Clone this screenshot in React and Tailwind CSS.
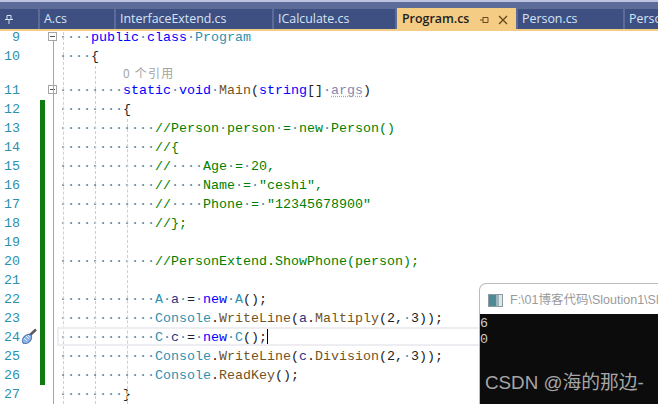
const tabs = [
  { label: '', w: 'w-[38px]', pin: true },
  { label: 'A.cs', w: 'w-[74px]' },
  { label: 'InterfaceExtend.cs', w: 'w-[156px]' },
  { label: 'ICalculate.cs', w: 'w-[121px]' },
  { label: 'Program.cs', w: 'w-[119px]', active: true },
  { label: 'Person.cs', w: 'w-[105px]' },
  { label: 'Person.cs', w: 'w-[60px]' },
];

const colors = {
  k: 'text-[#0000ff]',
  t: 'text-[#2b91af]',
  m: 'text-[#74531f]',
  c: 'text-[#008000]',
  v: 'text-[#1f377f]',
  a: 'text-[#7f88b5] underline decoration-dotted decoration-[#a9a9a9] underline-offset-2',
  p: 'text-[#222222]',
};

const lines = [
  { n: 9, open: true, clip: true, code: [['', '    '], ['k', 'public class '], ['t', 'Program']] },
  { n: 10, code: [['', '    '], ['p', '{']] },
  { lens: true },
  { n: 11, open: true, code: [['', '        '], ['k', 'static void '], ['m', 'Main'], ['p', '('], ['k', 'string'], ['p', '[] '], ['a', 'args'], ['p', ')']] },
  { n: 12, bar: true, code: [['', '        '], ['p', '{']] },
  { n: 13, bar: true, code: [['', '            '], ['c', '//Person person = new Person()']] },
  { n: 14, bar: true, code: [['', '            '], ['c', '//{']] },
  { n: 15, bar: true, code: [['', '            '], ['c', '//    Age = 20,']] },
  { n: 16, bar: true, code: [['', '            '], ['c', '//    Name = "ceshi",']] },
  { n: 17, bar: true, code: [['', '            '], ['c', '//    Phone = "12345678900"']] },
  { n: 18, bar: true, code: [['', '            '], ['c', '//};']] },
  { n: 19, bar: true, code: [] },
  { n: 20, bar: true, code: [['', '            '], ['c', '//PersonExtend.ShowPhone(person);']] },
  { n: 21, bar: true, code: [] },
  { n: 22, bar: true, code: [['', '            '], ['t', 'A '], ['v', 'a '], ['p', '= '], ['k', 'new '], ['t', 'A'], ['p', '();']] },
  { n: 23, bar: true, code: [['', '            '], ['t', 'Console'], ['p', '.'], ['m', 'WriteLine'], ['p', '('], ['v', 'a'], ['p', '.'], ['m', 'Maltiply'], ['p', '(2, 3));']] },
  { n: 24, bar: true, current: true, code: [['', '            '], ['t', 'C '], ['v', 'c '], ['p', '= '], ['k', 'new '], ['t', 'C'], ['p', '();']] },
  { n: 25, bar: true, code: [['', '            '], ['t', 'Console'], ['p', '.'], ['m', 'WriteLine'], ['p', '('], ['v', 'c'], ['p', '.'], ['m', 'Division'], ['p', '(2, 3));']] },
  { n: 26, bar: true, code: [['', '            '], ['t', 'Console'], ['p', '.'], ['m', 'ReadKey'], ['p', '();']] },
  { n: 27, code: [['', '        '], ['p', '}']] },
];

// spaces show up as visible-whitespace dots in the editor
function Token({ kind, text }) {
  return text.split(/( )/).map((part, i) =>
    part === ' ' ? (
      <span key={i} className="text-[#2b91af]">·</span>
    ) : (
      <span key={i} className={colors[kind]}>{part}</span>
    )
  );
}

function Screwdriver() {
  return (
    <svg className="absolute left-[1px] top-0" width="17" height="16" viewBox="0 0 17 16">
      <path d="M8 8 L15 1.5" stroke="#5a5a5a" strokeWidth="2.5" />
      <ellipse cx="6" cy="11" rx="5.5" ry="3.6" transform="rotate(-45 6 11)" fill="#8db4e6" stroke="#3f6fb0" />
      <path d="M3 10 L6 13 M5 8 L8 11 M7 7 L9 9" stroke="#e3edf9" strokeWidth="1" />
    </svg>
  );
}

function CodeRow({ line }) {
  if (line.lens) {
    return (
      <div className="h-[15px] pl-[123px] text-[12px] leading-[14px] tracking-[1.2px] text-[#a3a3a3] font-['Noto_Sans_CJK_SC',sans-serif]">
        0 个引用
      </div>
    );
  }
  return (
    <div className={`flex overflow-hidden ${line.clip ? 'h-[15px]' : 'h-[19px]'}`}>
      <div className={`w-5 shrink-0 text-right text-[#2b91af] ${line.clip ? '-mt-1' : ''}`}>{line.n}</div>
      <div className="relative w-[39px] shrink-0">
        {line.n === 24 && <Screwdriver />}
        {line.bar && <div className="ml-5 h-full w-[5px] bg-[#107c10]" />}
        {line.open && (
          <div className={`absolute left-[28px] flex h-[9px] w-[9px] items-center justify-center border border-[#a5a5a5] bg-white ${line.clip ? 'top-0' : 'top-1'}`}>
            <div className="h-px w-[5px] bg-[#555555]" />
          </div>
        )}
      </div>
      <div className={`whitespace-pre ${line.clip ? '-mt-1' : ''}`}>
        {line.code.map(([kind, text], i) => (
          <Token key={i} kind={kind} text={text} />
        ))}
        {line.current && <span className="inline-block h-[16px] w-px bg-black align-[-3px]" />}
      </div>
    </div>
  );
}

function ConsoleWindow() {
  return (
    <div className="absolute left-[479px] top-[283px] h-[121px] w-[179px] overflow-hidden rounded-tl-[7px] border-l border-t border-[#bcbcbc] bg-white">
      <div className="flex h-[30px] items-center pl-2 pt-[2px]">
        <div className="flex h-[13px] w-[15px] shrink-0 border border-[#8a9aa0] bg-[#dfe6ea]">
          <div className="w-[7px] bg-[#4f8a94]" />
          <div className="w-[3px] bg-[#9fb5bd]" />
        </div>
        <span className="ml-[7px] whitespace-nowrap text-[12.5px] text-[#9a9a9a] font-['Liberation_Sans','Noto_Sans_CJK_SC',sans-serif]">
          F:\01博客代码\Sloution1\Sloution1
        </span>
      </div>
      <div className="h-full bg-[#0c0c0c] pt-[2px] text-[13.33px] leading-[16px] text-[#cccccc] font-['Liberation_Mono',monospace]">
        <div>6</div>
        <div>0</div>
        <div className="ml-[5px] mt-[22px] whitespace-nowrap text-[18.8px] leading-[26px] text-[#a6a6a6] font-['Liberation_Sans','Noto_Sans_CJK_SC',sans-serif]">
          CSDN @海的那边-
        </div>
      </div>
    </div>
  );
}

export default function App() {
  return (
    <div className="relative h-[404px] w-[658px] overflow-hidden bg-white">
      <div className="h-[2px] bg-[#bcc4e2]" />
      <div className="mb-px flex h-[29px] items-end gap-[2px] overflow-hidden border-b-2 border-[#f5cc84] bg-[#5d6b99] text-[12.4px] font-['Open_Sans',sans-serif]">
        {tabs.map((tab, i) => (
          <div
            key={i}
            className={`flex shrink-0 items-center whitespace-nowrap ${tab.w} ${
              tab.active ? 'h-[21px] bg-[#f5cc84] pl-[5px] pt-[2px] font-semibold text-[#1e1e1e]' : 'h-[20px] bg-[#3e5082] pl-[4px] pt-px text-[#d6e4f5]'
            }`}
          >
            {tab.pin && (
              <svg width="8" height="9" viewBox="0 0 8 9" className="ml-px">
                <path d="M0 4.5H8M2 0.5H6V4.5H2ZM4 4.5V9" fill="none" stroke="#d6e4f5" />
              </svg>
            )}
            {tab.label}
            {tab.active && (
              <svg className="ml-[11px] shrink-0" width="28" height="10" viewBox="0 0 28 10">
                <path d="M0 5H3M3 2V8M3 2.5H8V7.5H3" fill="none" stroke="#6b4a1e" />
                <path d="M19 1L27 9M27 1L19 9" stroke="#6b4a1e" strokeWidth="1.4" />
              </svg>
            )}
          </div>
        ))}
      </div>

      <div className="relative text-[13.33px] leading-[19px] font-['Liberation_Mono',monospace]">
        {lines.map((line, i) => (
          <CodeRow key={i} line={line} />
        ))}

        {/* outline line and indent guides lie over the rows */}
        <div className="absolute left-[53px] top-[9px] bottom-0 w-px bg-[#a5a5a5]" />
        <div className="absolute left-[63px] top-0 bottom-0 border-l border-dashed border-[#cfcfcf]" />
        <div className="absolute left-[95px] top-[34px] bottom-0 border-l border-dashed border-[#cfcfcf]" />
        <div className="absolute left-[127px] top-[87px] bottom-0 border-l border-dashed border-[#cfcfcf]" />
        {/* current line highlight */}
        <div className="absolute left-[57px] right-0 top-[295px] h-[19px] border-2 border-r-0 border-[#eeeef2]" />
      </div>

      <ConsoleWindow />
    </div>
  );
}
